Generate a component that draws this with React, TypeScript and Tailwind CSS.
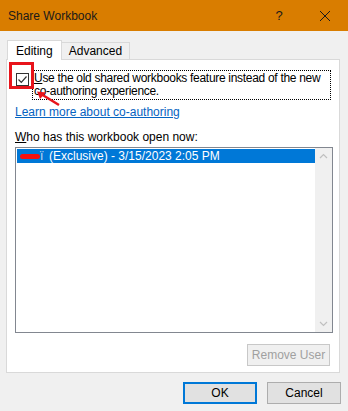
import React from "react";

const font = { fontFamily: '"Liberation Sans", Arial, sans-serif' };

export default function App() {
  return (
    <div className="w-[348px] h-[411px] bg-[#f0f0f0] flex flex-col text-[12px] text-black overflow-hidden" style={font}>
      {/* Barra de título */}
      <div className="h-[31px] bg-[#d97d00] flex items-center pl-[8px] shrink-0">
        <span className="text-[12px] text-[#1a1a1a]">Share Workbook</span>
        <span className="ml-auto w-[46px] text-center text-[13px] text-[#1a1a1a]">?</span>
        <span className="w-[46px] flex justify-center">
          <svg width="12" height="12" viewBox="0 0 12 12">
            <path d="M1 1 L11 11 M11 1 L1 11" stroke="#1a1a1a" strokeWidth="1" />
          </svg>
        </span>
      </div>

      {/* Pestañas */}
      <div className="flex items-end h-[28px] pl-[7px]">
        <div className="relative z-10 h-[20px] px-[8px] bg-white border border-[#d9d9d9] border-b-0 flex items-center -mb-px">Editing</div>
        <div className="h-[17px] px-[7px] bg-[#f0f0f0] border border-[#d9d9d9] border-l-0 border-b-0 flex items-center">Advanced</div>
      </div>

      {/* Panel */}
      <div className="relative mx-[6px] w-[334px] h-[314px] bg-white border border-[#d9d9d9] flex flex-col px-[8px]">
        <div className="flex items-start mt-[10px]">
          <div className="w-[13px] h-[13px] border border-[#333] mt-[3px] ml-[1px] flex items-center justify-center shrink-0">
            <svg width="11" height="11" viewBox="0 0 11 11">
              <path d="M1.5 5.5 L4.3 8.3 L9.5 2.5" fill="none" stroke="#333" strokeWidth="1.2" />
            </svg>
          </div>
          <p className="ml-[3px] w-[303px] border border-dotted border-black px-[1px] leading-[13px] py-px tracking-[-0.3px] first-letter:underline">
            Use the old shared workbooks feature instead of the new co-authoring experience.
          </p>
        </div>

        {/* Marca roja */}
        <div className="absolute left-[2px] top-[2px] w-[25px] h-[27px] border-[3px] border-[#e8141b]" />
        <svg className="absolute left-[28px] top-[30px]" width="26" height="18" viewBox="0 0 26 18">
          <path d="M24 15 L6 4" stroke="#e8141b" strokeWidth="2.5" />
          <path d="M2 1.5 L11 2.5 L5 9 Z" fill="#e8141b" />
        </svg>

        <a className="mt-[4px] text-[#0563c1] underline w-fit leading-[16px]">Learn more about co-authoring</a>

        <p className="mt-[9px] leading-[16px] first-letter:underline">Who has this workbook open now:</p>

        <div className="mt-[2px] w-[318px] h-[186px] border border-[#828790] flex">
          <div className="flex-1 pt-px pl-px">
            <div className="h-[14px] bg-[#0078d7] text-white flex items-center leading-[14px]">
              <span className="inline-block w-[20px] h-[5px] bg-[#f5100f] rounded-full ml-[3px]" />
              <span className="text-[#c8dcf0] w-[6px] mr-[3px]">ï</span>
              <span>(Exclusive) - 3/15/2023 2:05 PM</span>
            </div>
          </div>
          <div className="w-[17px] bg-[#f0f0f0] flex flex-col justify-between items-center py-[5px]">
            <svg width="9" height="6" viewBox="0 0 9 6">
              <path d="M1 5 L4.5 1.5 L8 5" fill="none" stroke="#c0c0c0" strokeWidth="1.2" />
            </svg>
            <svg width="9" height="6" viewBox="0 0 9 6">
              <path d="M1 1 L4.5 4.5 L8 1" fill="none" stroke="#c0c0c0" strokeWidth="1.2" />
            </svg>
          </div>
        </div>

        <div className="flex justify-end mt-[11px] pr-[1px]">
          <button className="w-[83px] h-[22px] bg-[#f0f0f0] border border-[#c8c8c8] text-[#a0a0a0]">Remove User</button>
        </div>
      </div>

      {/* Botones */}
      <div className="flex justify-end gap-[10px] pr-[7px] mt-[9px]">
        <button className="w-[74px] h-[22px] bg-[#e1e1e1] border-2 border-[#0078d7]">OK</button>
        <button className="w-[74px] h-[22px] bg-[#e1e1e1] border border-[#adadad]">Cancel</button>
      </div>
    </div>
  );
}
